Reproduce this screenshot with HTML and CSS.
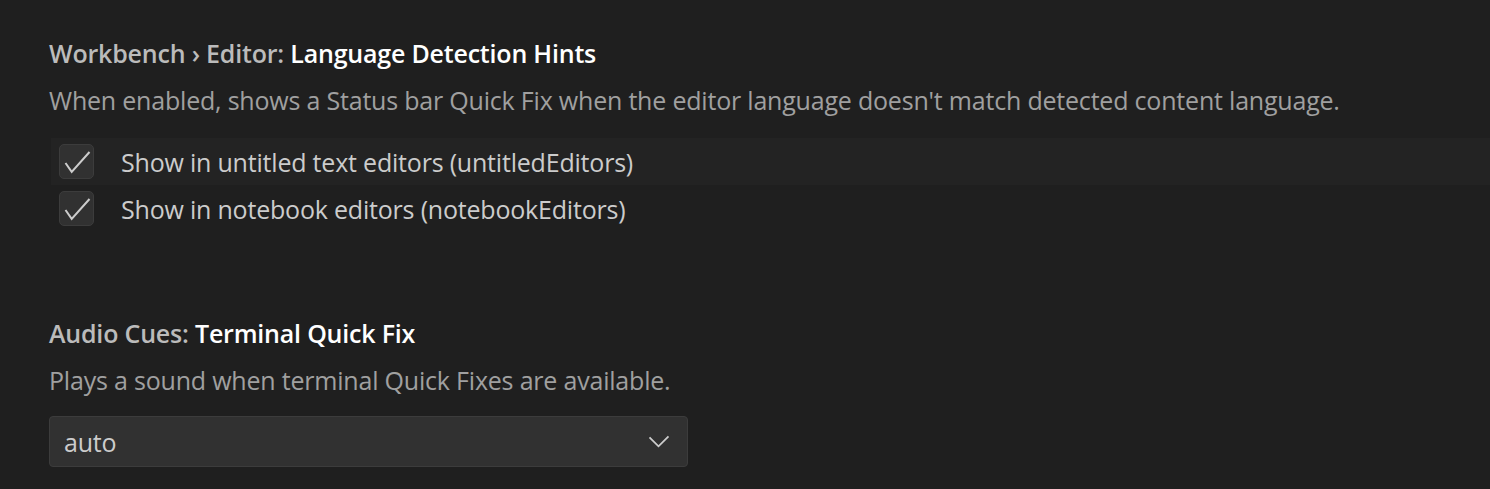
FILE: index.html
```html
<!DOCTYPE html>
<html>
<head>
<meta charset="utf-8">
<link rel="stylesheet" href="styles.css">
</head>
<body>
<div class="settings">
  <div class="setting first">
    <div class="title"><span class="category">Workbench › Editor: </span><span class="label">Language Detection Hints</span></div>
    <div class="desc">When enabled, shows a Status bar Quick Fix when the editor language doesn't match detected content language.</div>
    <div class="options">
      <div class="option hover">
        <span class="checkbox"><svg width="35" height="35" viewBox="0 0 35 35"><path d="M6.5 19 L12.7 27.8 L30.5 8" fill="none" stroke="#cccccc" stroke-width="2"/></svg></span>
        <span class="opt-label">Show in untitled text editors (untitledEditors)</span>
      </div>
      <div class="option">
        <span class="checkbox"><svg width="35" height="35" viewBox="0 0 35 35"><path d="M6.5 19 L12.7 27.8 L30.5 8" fill="none" stroke="#cccccc" stroke-width="2"/></svg></span>
        <span class="opt-label">Show in notebook editors (notebookEditors)</span>
      </div>
    </div>
  </div>
  <div class="setting second">
    <div class="title"><span class="category">Audio Cues: </span><span class="label">Terminal Quick Fix</span></div>
    <div class="desc">Plays a sound when terminal Quick Fixes are available.</div>
    <div class="select">
      <span class="select-value">auto</span>
      <svg class="chevron" width="22" height="14" viewBox="0 0 22 14"><path d="M1.5 2.3 L10.5 11.3 L20.5 1.3" fill="none" stroke="#cccccc" stroke-width="1.8"/></svg>
    </div>
  </div>
</div>
</body>
</html>
```
FILE: styles.css
```css
html, body {
  margin: 0;
  padding: 0;
  background: #1f1f1f;
  width: 1490px;
  height: 489px;
  overflow: hidden;
}
.settings {
  font-family: "Open Sans", "Noto Sans", sans-serif;
  font-size: 25px;
  line-height: 36px;
  letter-spacing: -0.2px;
  color: #cccccc;
}
.setting {
  display: flex;
  flex-direction: column;
}
.setting.first {
  padding-top: 35px;
}
.setting.second {
  padding-top: 83px;
}
.title {
  padding-left: 49px;
  white-space: nowrap;
}
.category {
  color: #bbbbbb;
  font-weight: 600;
}
.label {
  color: #ffffff;
  font-weight: 600;
}
.desc {
  padding-left: 49px;
  margin-top: 11px;
  color: #a0a0a0;
  white-space: nowrap;
}
.options {
  margin-top: 20px;
  display: flex;
  flex-direction: column;
  margin-left: 51px;
}
.option {
  height: 47px;
  display: flex;
  align-items: center;
  padding-left: 8px;
  gap: 27px;
}
.option.hover {
  background: #232323;
}
.checkbox {
  width: 33px;
  height: 33px;
  border: 1px solid #3c3c3c;
  background: #313131;
  border-radius: 5px;
  position: relative;
  flex: none;
}
.checkbox svg {
  position: absolute;
  left: -1px;
  top: -1px;
}
.opt-label {
  color: #cccccc;
  white-space: nowrap;
}
.select {
  margin-top: 18px;
  margin-left: 49px;
  box-sizing: border-box;
  width: 639px;
  height: 51px;
  border: 1px solid #3c3c3c;
  background: #313131;
  border-radius: 4px;
  display: flex;
  align-items: center;
  justify-content: space-between;
  padding: 0 17px 0 14px;
}
.select-value {
  color: #cccccc;
}
.chevron {
  flex: none;
}
```
